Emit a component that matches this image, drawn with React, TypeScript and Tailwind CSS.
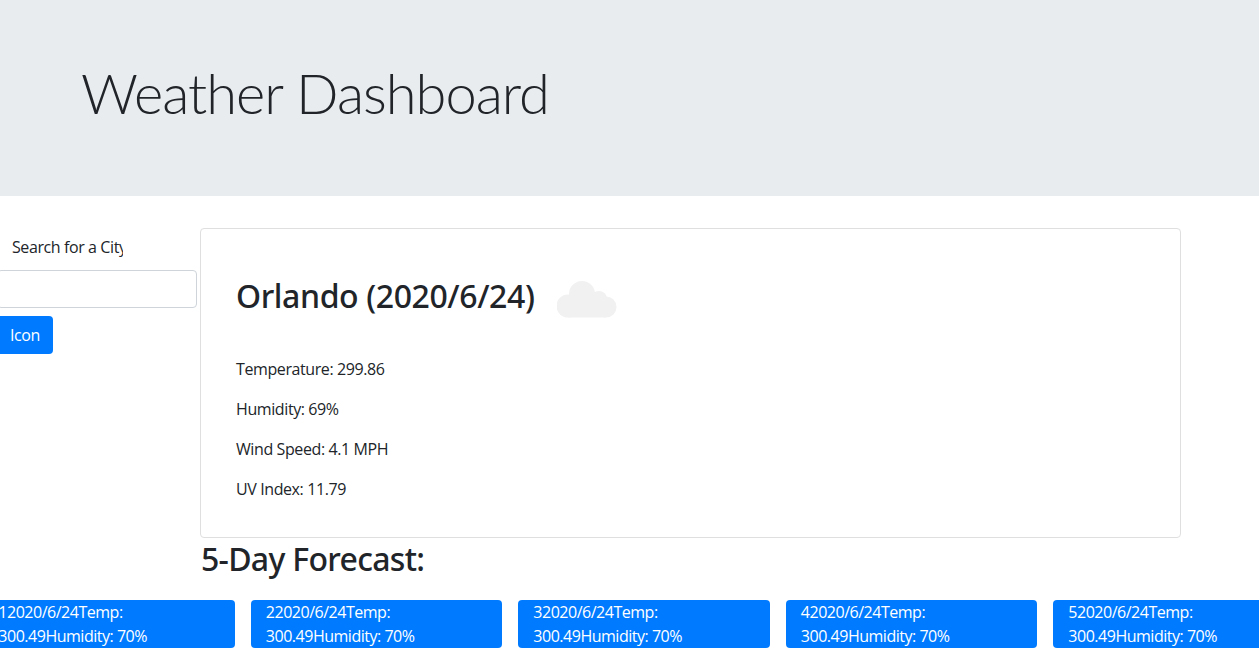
import React from "react";

const font = "font-['Open_Sans','Noto_Sans',sans-serif]";

const days = [1, 2, 3, 4, 5];

const Cloud = () => (
  <svg width="60" height="37" viewBox="0 0 60 37" className="ml-[23px] mt-[7px]" fill="#f1f1f1">
    <circle cx="25" cy="13" r="13" />
    <circle cx="42" cy="18" r="8" />
    <circle cx="11" cy="25" r="11.5" />
    <circle cx="49" cy="26" r="10.5" />
    <rect x="11" y="16" width="38" height="20.5" />
  </svg>
);

export default function App() {
  return (
    <div className={`${font} h-[655px] w-[1259px] overflow-hidden bg-white text-base text-[#212529]`}>
      <header className="h-[196px] bg-[#e9ecef] pl-[81px] pt-[59px]">
        <h1 className="font-['Lato',sans-serif] text-[56px] font-light leading-[67px] tracking-[-1px]">Weather Dashboard</h1>
      </header>

      <div className="-ml-[3px] mt-8 flex w-[1262px]">
        <aside className="w-[200px] shrink-0">
          <div className="mt-[7px] h-6 w-[126px] overflow-hidden whitespace-nowrap pl-[15px] leading-6 tracking-[-0.4px]">
            Search for a City
          </div>
          <input className="mt-[11px] block h-[38px] w-[200px] rounded border border-[#ced4da] bg-white" />
          <button className="mt-2 h-[38px] w-[56px] rounded bg-[#007bff] text-center leading-6 tracking-[-0.4px] text-white">
            Icon
          </button>
        </aside>

        <main className="ml-[3px] w-[981px]">
          <section className="h-[310px] rounded border border-[#dfdfdf] px-[35px] pt-[48px]">
            <div className="flex h-[37px] items-center">
              <h2 className="font-['Noto_Sans',sans-serif] text-[32px] font-medium leading-[38px] tracking-[-0.4px]">Orlando (2020/6/24)</h2>
              <Cloud />
            </div>
            <div className="mt-[43px] flex flex-col gap-4 leading-6 tracking-[-0.4px]">
              <p>Temperature: 299.86</p>
              <p>Humidity: 69%</p>
              <p>Wind Speed: 4.1 MPH</p>
              <p>UV Index: 11.79</p>
            </div>
          </section>
          <h3 className="mt-[2px] pl-px font-['Noto_Sans',sans-serif] text-[32px] font-medium leading-[38px] tracking-[-0.7px]">5-Day Forecast:</h3>
        </main>
      </div>

      <div className="-ml-[16.7px] mt-[22px] flex w-[1340px] gap-4">
        {days.map((d) => (
          <div key={d} className="h-12 w-[251.5px] shrink-0 rounded bg-[#007bff] px-[15px] leading-6 tracking-[-0.48px] text-white">
            {d}2020/6/24Temp: 300.49Humidity: 70%
          </div>
        ))}
      </div>
    </div>
  );
}
